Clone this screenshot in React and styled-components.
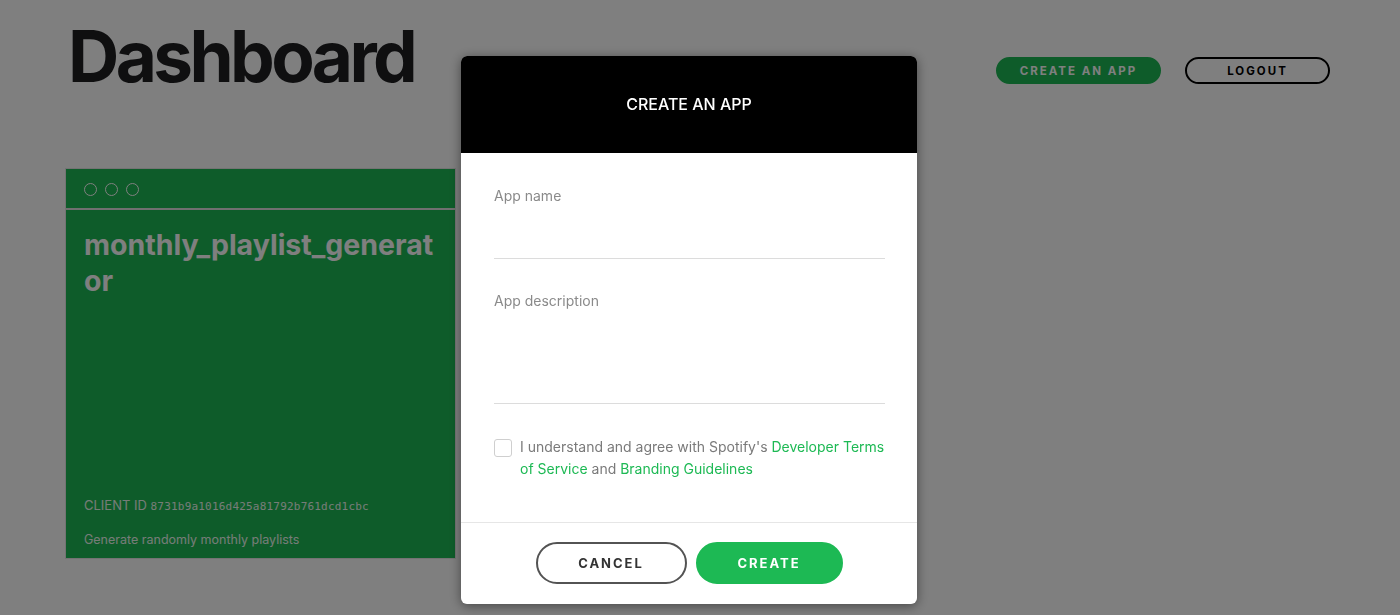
import React, { useState } from 'react';
import styled, { createGlobalStyle } from 'styled-components';

const GlobalStyle = createGlobalStyle`
  html, body {
    margin: 0;
    padding: 0;
    background: #ffffff;
    font-family: Inter, "Noto Sans", "Liberation Sans", sans-serif;
  }
  * { box-sizing: border-box; }
`;

const Page = styled.div`
  min-height: 615px;
  padding: 16px 70px 0 65px;
`;

const Header = styled.header`
  display: flex;
  justify-content: space-between;
  align-items: flex-start;
`;

const Title = styled.h1`
  margin: 0 0 0 3px;
  font-size: 71px;
  line-height: 80px;
  font-weight: 700;
  letter-spacing: -3.6px;
  color: #1e1e20;
`;

const Actions = styled.div`
  display: flex;
  gap: 24px;
  margin-top: 41px;
`;

const PillButton = styled.button`
  height: 27px;
  width: ${(p) => p.$width}px;
  border-radius: 14px;
  border: 2px solid ${(p) => (p.$primary ? '#1db954' : '#000')};
  background: ${(p) => (p.$primary ? '#1db954' : 'transparent')};
  color: ${(p) => (p.$primary ? '#ffffff' : '#000')};
  font-family: Inter, sans-serif;
  font-size: 11.5px;
  font-weight: 700;
  letter-spacing: 2px;
  text-transform: uppercase;
  padding: 0;
`;

const Card = styled.div`
  width: 391px;
  height: 391px;
  margin-top: 72px;
  background: #1db954;
  border: 1px solid #e6e6e6;
  display: flex;
  flex-direction: column;
`;

const CardBar = styled.div`
  height: 41px;
  border-bottom: 2px solid #e0e0e0;
  display: flex;
  align-items: center;
  gap: 8px;
  padding: 1px 18px 0;
`;

const Dot = styled.span`
  width: 13px;
  height: 13px;
  border-radius: 50%;
  border: 1px solid #ffffff;
`;

const CardBody = styled.div`
  flex: 1;
  display: flex;
  flex-direction: column;
  padding: 17px 18px 11px;
`;

const AppName = styled.h2`
  margin: 0;
  font-size: 28.5px;
  line-height: 36px;
  font-weight: 700;
  letter-spacing: 0;
  color: #ffffff;
  word-break: break-all;
`;

const CardFooter = styled.div`
  margin-top: auto;
  color: #ffffff;
  opacity: 0.92;
`;

const ClientId = styled.div`
  font-size: 13px;
  margin-bottom: 19px;
  code {
    font-family: "DejaVu Sans Mono", "Liberation Mono", monospace;
    font-size: 11px;
    letter-spacing: 0.2px;
  }
`;

const Description = styled.div`
  font-size: 12.5px;
`;

const Overlay = styled.div`
  position: fixed;
  inset: 0;
  background: rgba(0, 0, 0, 0.5);
  display: flex;
  justify-content: center;
  align-items: flex-start;
  padding: 56px 22px 0 0;
`;

const Modal = styled.div`
  width: 456px;
  background: #fff;
  border-radius: 6px;
  overflow: hidden;
  box-shadow: 0 2px 12px rgba(0, 0, 0, 0.45);
`;

const ModalHeader = styled.div`
  height: 97px;
  background: #000;
  color: #fff;
  display: flex;
  align-items: center;
  justify-content: center;
  font-size: 16px;
  font-weight: 500;
  padding-bottom: 2px;
`;

const ModalBody = styled.div`
  padding: 33px 32px 42px 33px;
  border-bottom: 1px solid #e6e6e6;
`;

const Field = styled.label`
  display: block;
  margin-bottom: 32px;
`;

const Label = styled.span`
  display: block;
  font-size: 14px;
  line-height: 20px;
  color: #8a8a8a;
`;

const Input = styled.input`
  display: block;
  width: 100%;
  height: 53px;
  border: none;
  border-bottom: 1px solid #dcdcdc;
  outline: none;
  font-family: inherit;
  font-size: 14px;
`;

const TextArea = styled.textarea`
  display: block;
  width: 100%;
  height: 93px;
  border: none;
  border-bottom: 1px solid #dcdcdc;
  outline: none;
  resize: none;
  font-family: inherit;
`;

const Agree = styled.div`
  display: flex;
  gap: 8px;
`;

const Box = styled.span`
  flex: none;
  width: 18px;
  height: 18px;
  margin-top: 3px;
  border: 1px solid #cfcfcf;
  border-radius: 3px;
`;

const AgreeText = styled.p`
  margin: 0;
  font-size: 14px;
  line-height: 22px;
  color: #7a7a7a;
`;

const Link = styled.a`
  color: #1db954;
  text-decoration: none;
`;

const ModalFooter = styled.div`
  display: flex;
  justify-content: center;
  gap: 9px;
  padding: 19px 0 20px;
`;

const FooterButton = styled.button`
  height: 42px;
  width: ${(p) => p.$width}px;
  border-radius: 21px;
  border: 2px solid ${(p) => (p.$primary ? '#1db954' : '#535353')};
  background: ${(p) => (p.$primary ? '#1db954' : '#fff')};
  color: ${(p) => (p.$primary ? '#fff' : '#333')};
  font-family: Inter, sans-serif;
  font-size: 13px;
  font-weight: 700;
  letter-spacing: 2px;
  padding: 0;
`;

export default function App() {
  const [name, setName] = useState('');
  const [desc, setDesc] = useState('');

  return (
    <>
      <GlobalStyle />
      <Page>
        <Header>
          <Title>Dashboard</Title>
          <Actions>
            <PillButton $primary $width={165}>Create an app</PillButton>
            <PillButton $width={145}>Logout</PillButton>
          </Actions>
        </Header>
        <Card>
          <CardBar>
            <Dot />
            <Dot />
            <Dot />
          </CardBar>
          <CardBody>
            <AppName>monthly_playlist_generator</AppName>
            <CardFooter>
              <ClientId>
                CLIENT ID <code>8731b9a1016d425a81792b761dcd1cbc</code>
              </ClientId>
              <Description>Generate randomly monthly playlists</Description>
            </CardFooter>
          </CardBody>
        </Card>
      </Page>

      <Overlay>
        <Modal>
          <ModalHeader>CREATE AN APP</ModalHeader>
          <ModalBody>
            <Field>
              <Label>App name</Label>
              <Input value={name} onChange={(e) => setName(e.target.value)} />
            </Field>
            <Field>
              <Label>App description</Label>
              <TextArea value={desc} onChange={(e) => setDesc(e.target.value)} />
            </Field>
            <Agree>
              <Box />
              <AgreeText>
                I understand and agree with Spotify's <Link href="#">Developer Terms of Service</Link> and{' '}
                <Link href="#">Branding Guidelines</Link>
              </AgreeText>
            </Agree>
          </ModalBody>
          <ModalFooter>
            <FooterButton $width={151}>CANCEL</FooterButton>
            <FooterButton $primary $width={147}>CREATE</FooterButton>
          </ModalFooter>
        </Modal>
      </Overlay>
    </>
  );
}
